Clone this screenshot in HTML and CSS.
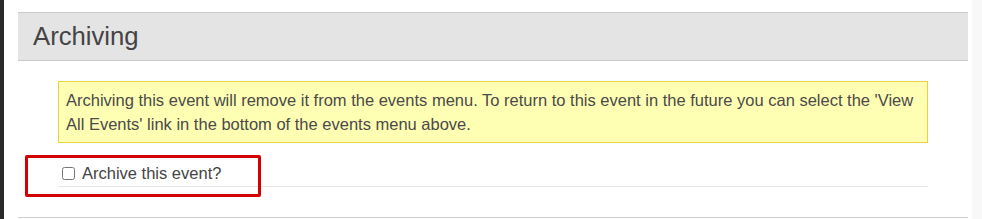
FILE: index.html
```html
<!DOCTYPE html>
<html>
<head>
<meta charset="utf-8">
<link rel="stylesheet" href="styles.css">
</head>
<body>
<div class="page">
  <div class="rail-left"></div>
  <main class="main">
    <section class="panel">
      <h2 class="panel-title">Archiving</h2>
      <div class="panel-body">
        <div class="notice">Archiving this event will remove it from the events menu. To return to this event in the future you can select the 'View All Events' link in the bottom of the events menu above.</div>
        <div class="check-row">
          <label class="check-label"><input type="checkbox" class="check"> Archive this event?</label>
          <div class="highlight"></div>
        </div>
      </div>
    </section>
  </main>
  <div class="rail-right"></div>
</div>
</body>
</html>
```
FILE: styles.css
```css
html, body {
  margin: 0;
  padding: 0;
  background: #fff;
  font-family: "Liberation Sans", Arial, sans-serif;
  color: #444;
}
.page {
  display: flex;
  width: 982px;
  height: 219px;
  overflow: hidden;
}
.rail-left {
  width: 4px;
  background: #2a2a2a;
  flex: none;
}
.main {
  flex: none;
  width: 968px;
  padding: 12px 0 0 14px;
  box-sizing: border-box;
  background: #fff;
}
.rail-right {
  flex: 1;
  background: #f8f8f8;
}
.panel {
  width: 950px;
  border-bottom: 1px solid #cfcfcf;
  padding-bottom: 30px;
}
.panel-title {
  margin: 0;
  height: 47px;
  border-top: 1px solid #c9c9c9;
  border-bottom: 1px solid #c9c9c9;
  background: #e4e4e4;
  font-weight: normal;
  font-size: 25.7px;
  line-height: 47px;
  padding-left: 15px;
  color: #444;
}
.panel-body {
  padding: 20px 40px 0 40px;
}
.notice {
  background: #ffffb4;
  border: 1px solid #e6d24a;
  padding: 6px 7px 6px 7px;
  font-size: 16.5px;
  line-height: 24px;
  color: #4a4a4a;
}
.check-row {
  position: relative;
  margin-top: 18px;
  border-bottom: 1px solid #e6e6e6;
  height: 25px;
}
.check-label {
  display: flex;
  align-items: center;
  font-size: 16.5px;
  line-height: 24px;
  color: #444;
  padding-left: 4px;
}
.check {
  width: 13px;
  height: 13px;
  margin: 0 7px 0 0;
}
.highlight {
  position: absolute;
  left: -33px;
  top: -6px;
  width: 230px;
  height: 36px;
  border: 3px solid #d40000;
  border-radius: 2px;
}
```
